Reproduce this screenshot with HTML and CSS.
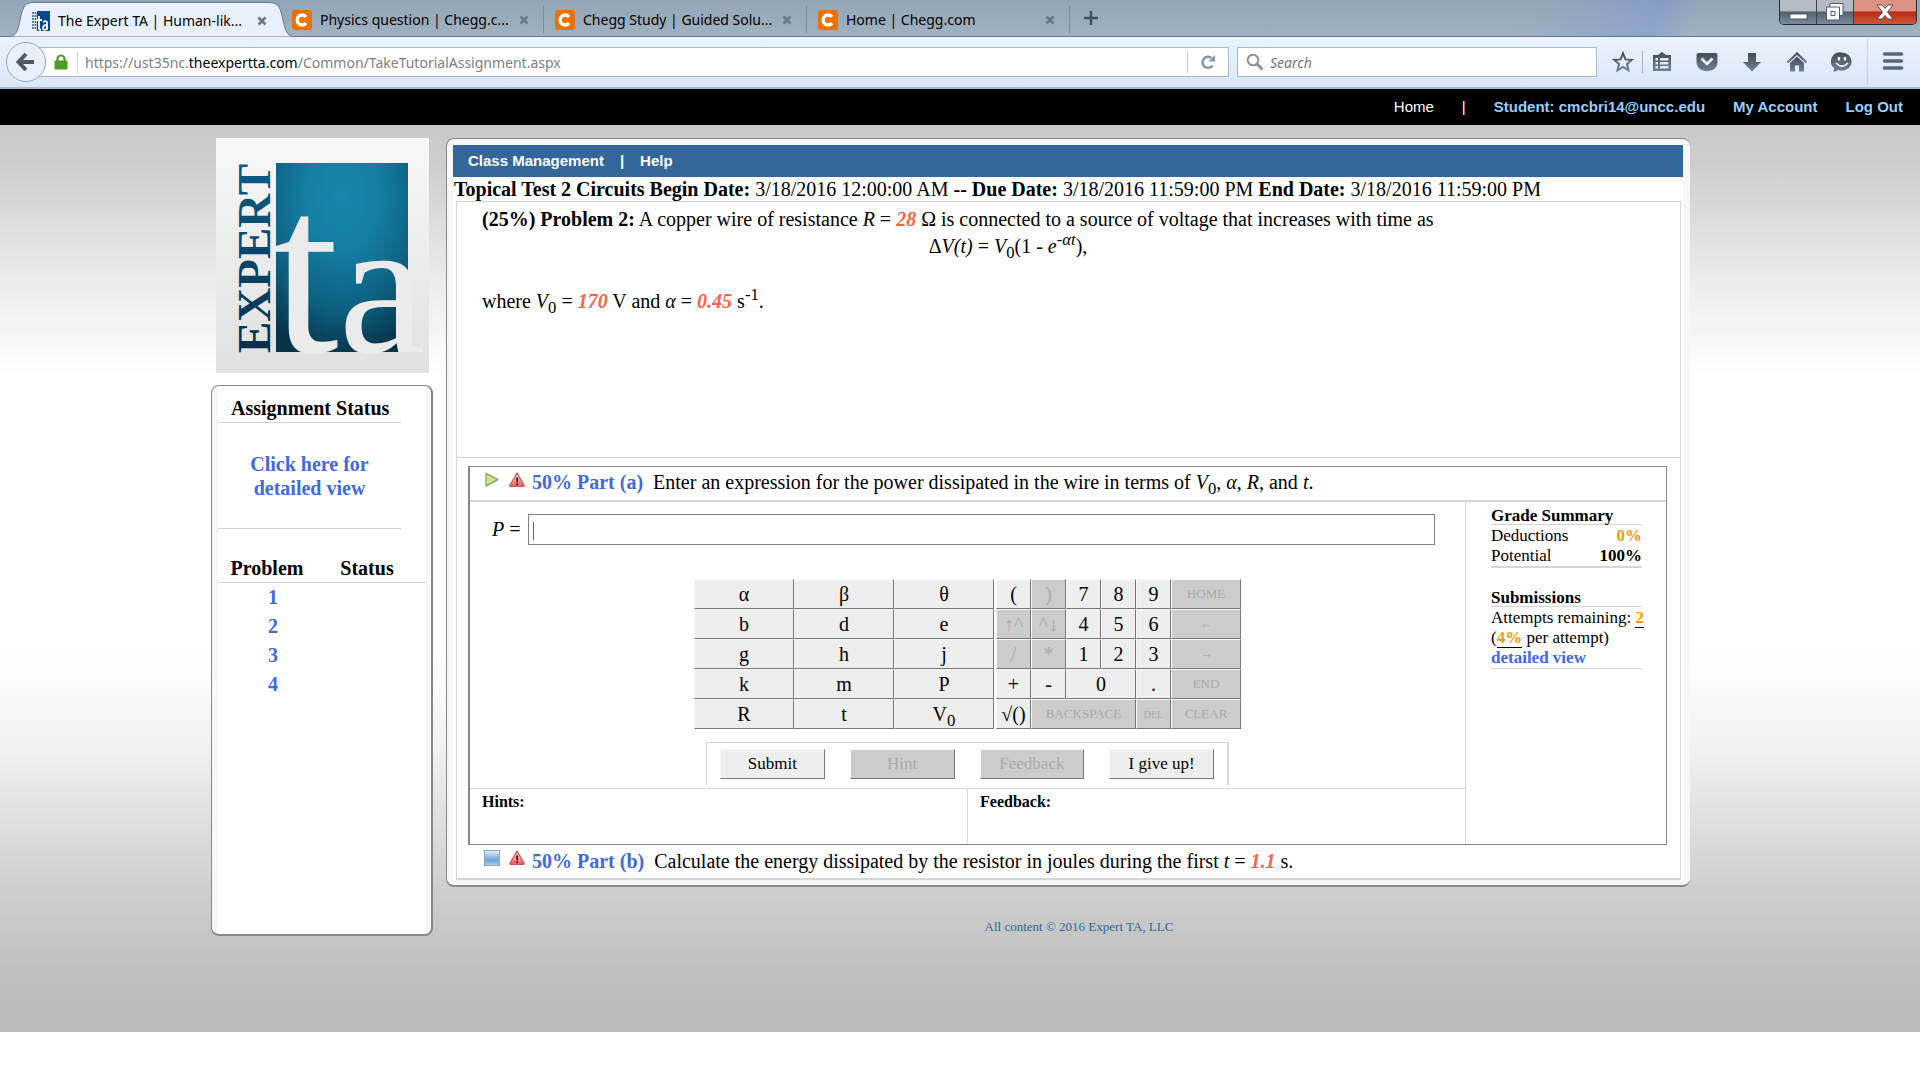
FILE: index.html
```html
<!DOCTYPE html>
<html lang="en">
<head>
<meta charset="UTF-8">
<meta name="viewport" content="width=device-width, initial-scale=1.0">
<title>The Expert TA | Human-like Grading</title>
<link rel="stylesheet" href="styles.css">
</head>
<body>

<svg class="defs" aria-hidden="true">
  <defs>
    <linearGradient id="steel" x1="0" y1="0" x2="0" y2="1">
      <stop offset="0" stop-color="#414d5a"/>
      <stop offset="1" stop-color="#728191"/>
    </linearGradient>
    <linearGradient id="red" x1="0" y1="0" x2="0" y2="1">
      <stop offset="0" stop-color="#fbe3e3"/>
      <stop offset="1" stop-color="#e55a5a"/>
    </linearGradient>
    <symbol id="warning" viewBox="0 0 16 16">
      <path d="M8 1 L15 13 Q15.500 14.500 14 14.500 H2 Q.5 14.500 1 13 Z" fill="url(#red)" stroke="#cc5353" stroke-width="1.200" stroke-linejoin="round"/>
      <path d="M7 5.500h2.200l-.4 5h-1.400z M7.100 11.500h2v1.600h-2z" fill="#6d0d0d"/>
    </symbol>
    <symbol id="chegg" viewBox="0 0 20 20">
      <rect width="20" height="20" rx="3" fill="#eb7100"/>
      <path d="M14 6.800 A5 5 0 1 0 14 13.200" fill="none" stroke="#fff" stroke-width="3.400"/>
    </symbol>
    <symbol id="close" viewBox="0 0 10 10">
      <path d="M1.500 1.500 L8.500 8.500 M8.500 1.500 L1.500 8.500" stroke="#66788a" stroke-width="2.600"/>
    </symbol>
  </defs>
</svg>

<div class="browser">
  <div class="tab-strip">
    <div class="tab active">
      <svg class="tab-shape" viewBox="0 0 290 37" width="290" height="37">
        <path d="M0 37 C14 37 12 25 16 12 C18 4 22 2.500 28 2.500 H262 C270 2.500 273 5 275 12 C279 25 278 37 290 37 Z" fill="#e8f1fb" stroke="#64788c"/>
      </svg>
      <svg class="favicon" viewBox="0 0 18 20" width="18" height="20">
        <rect x="5" width="13" height="20" fill="#08498d"/>
        <path d="M1 1v18 M3.500 1v18" stroke="#2e5d91" stroke-width="1.500" stroke-dasharray="2 1"/>
        <path d="M7 5v12q0 2 2 2 M5 9h5 M11 11q4-2 4 1v7 M15 14q-4 0-4 3t4 1" fill="none" stroke="#fff" stroke-width="1.800"/>
      </svg>
      <span class="tab-title">The Expert TA | Human-lik...</span>
      <button class="tab-close" aria-label="Close tab"><svg width="10" height="10"><use href="#close"/></svg></button>
    </div>
    <div class="tab">
      <svg class="favicon" width="20" height="20"><use href="#chegg"/></svg>
      <span class="tab-title">Physics question | Chegg.c...</span>
      <button class="tab-close" aria-label="Close tab"><svg width="10" height="10"><use href="#close"/></svg></button>
    </div>
    <div class="tab">
      <svg class="favicon" width="20" height="20"><use href="#chegg"/></svg>
      <span class="tab-title">Chegg Study | Guided Solu...</span>
      <button class="tab-close" aria-label="Close tab"><svg width="10" height="10"><use href="#close"/></svg></button>
    </div>
    <div class="tab">
      <svg class="favicon" width="20" height="20"><use href="#chegg"/></svg>
      <span class="tab-title">Home | Chegg.com</span>
      <button class="tab-close" aria-label="Close tab"><svg width="10" height="10"><use href="#close"/></svg></button>
    </div>
    <button class="new-tab" aria-label="New tab">
      <svg viewBox="0 0 14 14" width="14" height="14"><path d="M7 0v14 M0 7h14" stroke="#43515f" stroke-width="2.500"/></svg>
    </button>
    <div class="window-buttons">
      <button class="win" aria-label="Minimize">
        <svg viewBox="0 0 20 20" width="20" height="20"><rect x="2" y="12" width="17" height="5" fill="#fff" stroke="#4c5a6a"/></svg>
      </button>
      <button class="win" aria-label="Restore">
        <svg viewBox="0 0 20 20" width="20" height="20">
          <path d="M5 1.500h13v12h-13z" fill="#fff" stroke="#4c5a6a"/>
          <path d="M1.500 5h13v13h-13z M6 9.500h4v4h-4z" fill="#fff" fill-rule="evenodd" stroke="#4c5a6a"/>
        </svg>
      </button>
      <button class="win win-close" aria-label="Close">
        <svg viewBox="0 0 20 20" width="20" height="20"><path d="M2 3h5l3 3.500 3-3.500h5l-5.500 7 5.500 7h-5l-3-3.500-3 3.500h-5l5.500-7z" fill="#fff" stroke="#5c4a55"/></svg>
      </button>
    </div>
  </div>

  <div class="toolbar">
    <button class="back" aria-label="Back">
      <svg viewBox="0 0 20 20" width="20" height="20"><path d="M10 2 L2.500 10 L10 18 M3 10 H18" fill="none" stroke="#4d5967" stroke-width="4"/></svg>
    </button>
    <div class="url-bar">
      <svg class="lock" viewBox="0 0 14 16" width="14" height="16">
        <path d="M3.500 8V5a3.500 3.500 0 0 1 7 0v3" fill="none" stroke="#4f9b26" stroke-width="2.200"/>
        <rect x="0.500" y="6.500" width="13" height="9" rx="1" fill="#4f9b26"/>
      </svg>
      <span class="url">https://ust35nc.<b>theexpertta.com</b>/Common/TakeTutorialAssignment.aspx</span>
      <button class="reload" aria-label="Reload">
        <svg viewBox="0 0 16 16" width="16" height="16">
          <path d="M12.500 11.500 A5.500 5.500 0 1 1 11.500 4" fill="none" stroke="#8797a7" stroke-width="2.600"/>
          <path d="M15 1v6.500h-6.500z" fill="#8797a7"/>
        </svg>
      </button>
    </div>
    <div class="search-bar">
      <svg viewBox="0 0 18 18" width="18" height="18">
        <circle cx="7" cy="7" r="5.300" fill="none" stroke="#909090" stroke-width="2"/>
        <path d="M10.500 10.500 L16.500 16.500" stroke="#909090" stroke-width="3"/>
      </svg>
      <input type="text" placeholder="Search" aria-label="Search">
    </div>
    <div class="tools">
      <button class="tool" aria-label="Bookmark">
        <svg viewBox="0 0 22 22" width="22" height="22"><path d="M11 2.500l2.500 5.900 6.300.5-4.800 4.200 1.500 6.300-5.500-3.400-5.500 3.400 1.500-6.300-4.800-4.200 6.300-.5z" fill="none" stroke="url(#steel)" stroke-width="2"/></svg>
      </button>
      <button class="tool split" aria-label="Bookmarks list">
        <svg viewBox="0 0 22 22" width="22" height="22">
          <path d="M2 4h5l4-3 4 3h5v16h-18z M4.500 7v2.500h2.500v-2.500z M9 7v2.500h8.500v-2.500z M4.500 11v2.500h2.500v-2.500z M9 11v2.500h8.500v-2.500z M4.500 15v2.500h2.500v-2.500z M9 15v2.500h8.500v-2.500z" fill="url(#steel)" fill-rule="evenodd"/>
        </svg>
      </button>
      <button class="tool" aria-label="Pocket">
        <svg viewBox="0 0 22 22" width="22" height="22">
          <path d="M0.500 4q0-2 2-2h17q2 0 2 2v6q0 6-4 8.500-6.500 3.500-13 0-4-2.500-4-8.500z" fill="url(#steel)"/>
          <path d="M5.500 7.500l5.500 5.500 5.500-5.500" fill="none" stroke="#eef5fc" stroke-width="2.600"/>
        </svg>
      </button>
      <button class="tool" aria-label="Downloads">
        <svg viewBox="0 0 22 22" width="22" height="22"><path d="M7 2h8v9h5l-9 9.500-9-9.500h5z" fill="url(#steel)"/></svg>
      </button>
      <button class="tool" aria-label="Home page">
        <svg viewBox="0 0 22 22" width="22" height="22">
          <path d="M1.500 11.500l9.500-9 9.500 9" fill="none" stroke="url(#steel)" stroke-width="2.200"/>
          <path d="M4 12l7-6.500 7 6.500v8.500h-5v-6h-4v6h-5z" fill="url(#steel)"/>
        </svg>
      </button>
      <button class="tool" aria-label="Chat">
        <svg viewBox="0 0 22 22" width="22" height="22">
          <path d="M11 1.500a9.500 9 0 0 1 0 18.200q-2 0-4-.7-2 2-5 1.500 1.500-2 1-3.500a9.500 9 0 0 1 8-15.500z" fill="url(#steel)"/>
          <path d="M8 6v3.500 M14 6v3.500" stroke="#eef5fc" stroke-width="2.400"/>
          <path d="M5 12q6 6.500 12 0" fill="none" stroke="#eef5fc" stroke-width="1.800"/>
        </svg>
      </button>
      <button class="tool menu" aria-label="Menu">
        <svg viewBox="0 0 22 22" width="22" height="22"><path d="M2.500 3h17 M2.500 10h17 M2.500 17h17" stroke="#596776" stroke-width="3.600" stroke-linecap="round"/></svg>
      </button>
    </div>
  </div>
</div>

<nav class="account-bar">
  <a class="home" href="#">Home</a>
  <span class="bar">|</span>
  <a href="#">Student: cmcbri14@uncc.edu</a>
  <a href="#">My Account</a>
  <a href="#">Log Out</a>
</nav>

<div class="page">
  <aside class="side">
    <svg class="logo" viewBox="0 0 213 235" width="213" height="235" role="img" aria-label="Expert TA">
      <defs>
        <linearGradient id="paper" x1="0" y1="0" x2="0" y2="1">
          <stop offset="0" stop-color="#f8f8f8"/>
          <stop offset="1" stop-color="#e0e0e0"/>
        </linearGradient>
        <radialGradient id="blue" cx="0.500" cy="0.180" r="0.850">
          <stop offset="0" stop-color="#1787ad"/>
          <stop offset="0.350" stop-color="#147da2"/>
          <stop offset="0.700" stop-color="#0e5f7e"/>
          <stop offset="1" stop-color="#07344b"/>
        </radialGradient>
        <linearGradient id="ink" x1="0" y1="0" x2="1" y2="0">
          <stop offset="0" stop-color="#062f4a"/>
          <stop offset="1" stop-color="#0c5c86"/>
        </linearGradient>
      </defs>
      <rect width="213" height="235" fill="url(#paper)"/>
      <rect x="60" y="25" width="132" height="189" fill="url(#blue)"/>
      <text class="logo-expert" x="0" y="0" transform="translate(54 215) rotate(-90)" fill="url(#ink)">EXPERT</text>
      <text class="logo-ta" x="56" y="214">t<tspan class="logo-a">a</tspan></text>
    </svg>

    <section class="status-panel">
      <h2>Assignment Status</h2>
      <div class="detail-link"><a href="#">Click here for<br>detailed view</a></div>
      <table class="problems">
        <thead><tr><th>Problem</th><th>Status</th></tr></thead>
        <tbody>
          <tr><td><a href="#">1</a></td><td></td></tr>
          <tr><td><a href="#">2</a></td><td></td></tr>
          <tr><td><a href="#">3</a></td><td></td></tr>
          <tr><td><a href="#">4</a></td><td></td></tr>
        </tbody>
      </table>
    </section>
  </aside>

  <div class="content">
    <main class="main-panel">
      <nav class="class-nav">
        <a href="#">Class Management</a>
        <span>|</span>
        <a href="#">Help</a>
      </nav>
      <div class="dates"><b>Topical Test 2 Circuits Begin Date:</b> 3/18/2016 12:00:00 AM <b>-- Due Date:</b> 3/18/2016 11:59:00 PM <b>End Date:</b> 3/18/2016 11:59:00 PM</div>

      <div class="assignment">
        <div class="problem">
          <p><b>(25%) Problem 2:</b> A copper wire of resistance <i>R</i> = <em>28</em> Ω is connected to a source of voltage that increases with time as</p>
          <p class="equation">Δ<i>V(t)</i> = <i>V</i><sub>0</sub>(1 - <i>e</i><sup>-<i>αt</i></sup>),</p>
          <p>where <i>V</i><sub>0</sub> = <em>170</em> V and <i>α</i> = <em>0.45</em> s<sup>-1</sup>.</p>
        </div>

        <section class="part">
          <div class="part-head">
            <svg class="part-icon" viewBox="0 0 16 16" width="16" height="16"><path d="M2 1.500 L14 7.500 L2 14 Z" fill="#cbe59a" stroke="#8fae62" stroke-width="1.500" stroke-linejoin="round"/></svg>
            <svg class="part-icon" width="16" height="16"><use href="#warning"/></svg>
            <a href="#">50% Part (a)</a>
            <span>Enter an expression for the power dissipated in the wire in terms of <i>V</i><sub>0</sub>, <i>α</i>, <i>R</i>, and <i>t</i>.</span>
          </div>
          <div class="part-body">
            <div class="work">
              <div class="answer">
                <label for="answer"><i>P</i> =</label>
                <div class="answer-box">
                  <input type="text" id="answer">
                  <span class="caret"></span>
                </div>
              </div>

              <div class="keyboard">
                <div class="keys letters">
                  <button>α</button><button>β</button><button>θ</button>
                  <button>b</button><button>d</button><button>e</button>
                  <button>g</button><button>h</button><button>j</button>
                  <button>k</button><button>m</button><button>P</button>
                  <button>R</button><button>t</button><button>V<sub>0</sub></button>
                </div>
                <div class="keys numbers">
                  <button>(</button><button disabled>)</button><button>7</button><button>8</button><button>9</button><button class="wide small" disabled>HOME</button>
                  <button disabled>↑^</button><button disabled>^↓</button><button>4</button><button>5</button><button>6</button><button class="wide small" disabled>←</button>
                  <button disabled>/</button><button disabled>*</button><button>1</button><button>2</button><button>3</button><button class="wide small" disabled>→</button>
                  <button>+</button><button>-</button><button class="wide">0</button><button>.</button><button class="wide small" disabled>END</button>
                  <button>√()</button><button class="wider small" disabled>BACKSPACE</button><button class="tiny" disabled>DEL</button><button class="wide small" disabled>CLEAR</button>
                </div>
              </div>

              <div class="actions">
                <button>Submit</button>
                <button disabled>Hint</button>
                <button disabled>Feedback</button>
                <button>I give up!</button>
              </div>

              <div class="notes">
                <div>Hints:</div>
                <div>Feedback:</div>
              </div>
            </div>

            <div class="grades">
              <h3>Grade Summary</h3>
              <dl>
                <dt>Deductions</dt><dd class="orange">0%</dd>
                <dt>Potential</dt><dd>100%</dd>
              </dl>
              <h3>Submissions</h3>
              <div class="attempts">
                Attempts remaining: <b class="limit">2</b><br>
                (<b class="limit">4%</b> per attempt)<br>
                <a href="#">detailed view</a>
              </div>
            </div>
          </div>
        </section>

        <div class="part-head part-b">
          <svg class="part-icon" viewBox="0 0 16 16" width="16" height="16">
            <defs>
              <linearGradient id="square" x1="0" y1="0" x2="0" y2="1">
                <stop offset="0" stop-color="#e6f0f9"/>
                <stop offset="0.650" stop-color="#6aa3d8"/>
                <stop offset="1" stop-color="#b5d1ea"/>
              </linearGradient>
            </defs>
            <rect x="0.500" y="0.500" width="15" height="15" fill="url(#square)" stroke="#89a9c6"/>
          </svg>
          <svg class="part-icon" width="16" height="16"><use href="#warning"/></svg>
          <a href="#">50% Part (b)</a>
          <span>Calculate the energy dissipated by the resistor in joules during the first <i>t</i> = <em>1.1</em> s.</span>
        </div>
      </div>
    </main>
    <footer>All content © 2016 Expert TA, LLC</footer>
  </div>
</div>

</body>
</html>
```
FILE: styles.css
```css
* {
  box-sizing: border-box;
}
body {
  margin: 0;
  background: #fff;
  color: #000;
  font-family: "Liberation Serif", "Times New Roman", serif;
  font-size: 20px;
}
a {
  color: #4169e1;
  font-weight: bold;
  text-decoration: none;
}
button {
  font-family: inherit;
  padding: 0;
  border: none;
  background: none;
}
p, h2, h3, dl, dd {
  margin: 0;
}
svg {
  display: block;
  flex: none;
}
sub, sup {
  line-height: 0;
}
em {
  color: #ff6347;
  font-weight: bold;
}
.defs {
  position: absolute;
  width: 0;
  height: 0;
}

/* browser window */
.browser {
  font-family: "Noto Sans", "Open Sans", sans-serif;
  font-size: 14px;
}
.tab-strip {
  display: flex;
  height: 37px;
  padding-left: 18px;
  border-bottom: 1px solid #64788c;
  background:
    linear-gradient(115deg, transparent 79%, rgba(120, 145, 220, 0.3) 84%, rgba(120, 145, 220, 0.4) 86%, transparent 88%),
    linear-gradient(#93a5b5, #a0b1c0);
}
.tab {
  position: relative;
  display: flex;
  align-items: center;
  width: 263px;
  margin: 6px 0 3px;
  padding: 0 14px 0 11px;
  border-right: 1px solid #7b8d9d;
}
.tab.active {
  margin: 0;
  padding-left: 14px;
  padding-top: 5px;
  border-right: none;
}
.tab-shape {
  position: absolute;
  left: -12px;
  top: 0;
}
.favicon, .tab.active .tab-title, .tab.active .tab-close {
  position: relative;
}
.tab-title {
  flex: 1;
  margin-left: 8px;
  white-space: nowrap;
}
.new-tab {
  margin-left: 14px;
}
.window-buttons {
  display: flex;
  height: 25px;
  margin-left: auto;
  margin-right: 3px;
  border: 1px solid #222b35;
  border-top: none;
  border-radius: 0 0 5px 5px;
  overflow: hidden;
}
.win {
  display: flex;
  justify-content: center;
  align-items: center;
  width: 37px;
  border-right: 1px solid #35424f;
  background: linear-gradient(#b3bcc4 45%, #52606f 50%, #7b8b99);
}
.win-close {
  width: 62px;
  border-right: none;
  background: linear-gradient(#dd9384 45%, #b72c14 50%, #d0563c);
}
.toolbar {
  display: flex;
  align-items: center;
  height: 52px;
  padding: 0 13px 0 6px;
  border-bottom: 2px solid #a5bace;
  background: linear-gradient(#eaf3fc, #d9e7f8);
}
.back {
  position: relative;
  z-index: 1;
  display: flex;
  justify-content: center;
  align-items: center;
  width: 40px;
  height: 40px;
  border: 1px solid #93a9be;
  border-radius: 50%;
  background: #e8f1fb;
}
.url-bar {
  display: flex;
  align-items: center;
  flex: 1;
  height: 30px;
  margin-left: -8px;
  padding-left: 15px;
  border: 1px solid #a5bace;
  background: #fff;
}
.url {
  flex: 1;
  margin-left: 9px;
  padding-left: 7px;
  border-left: 1px solid #d0d0d0;
  line-height: 21px;
  color: #808080;
}
.url b {
  color: #000;
  font-weight: normal;
}
.reload {
  display: flex;
  justify-content: center;
  align-items: center;
  width: 41px;
  height: 22px;
  border-left: 1px solid #d0d0d0;
}
.search-bar {
  display: flex;
  align-items: center;
  width: 360px;
  height: 30px;
  margin-left: 8px;
  padding-left: 8px;
  border: 1px solid #a5bace;
  background: #fff;
}
.search-bar input {
  flex: 1;
  margin-left: 6px;
  padding: 0;
  border: none;
  background: none;
  font: italic 14px "Noto Sans", sans-serif;
}
.search-bar input::placeholder {
  color: #757575;
}
.tools {
  display: flex;
  align-items: center;
  margin-left: 6px;
}
.tool {
  display: flex;
  justify-content: center;
  width: 45px;
}
.tool:first-child {
  width: 39px;
}
.tool.split {
  width: 42px;
  padding-right: 3px;
  border-left: 1px solid #a9b6c3;
}
.tool.menu {
  width: 40px;
  margin-left: 3px;
  padding: 12px 0 12px 10px;
  border-left: 1px solid #c5d3e1;
}

/* account links */
.account-bar {
  display: flex;
  justify-content: flex-end;
  gap: 28px;
  height: 36px;
  padding-right: 17px;
  background: #000;
  font-family: "Liberation Sans", Arial, sans-serif;
  font-size: 15px;
  line-height: 36px;
}
.account-bar a {
  color: #99ccff;
}
.account-bar .home, .account-bar .bar {
  color: #fff;
  font-weight: normal;
}

/* page */
.page {
  display: flex;
  align-items: flex-start;
  padding: 13px 230px 96px 211px;
  background: linear-gradient(#c9c9c9, #cdcdcd 4%, #ebebeb 17%, #fff 28%, #fff 58%, #f0f0f0 69%, #cfcfcf 84%, #bebebe 94%, #bababa);
}
.side {
  width: 222px;
  margin-right: 13px;
}
.logo {
  margin: 0 0 12px 5px;
  overflow: visible;
}
.logo-expert {
  font-family: "Liberation Serif", serif;
  font-size: 47px;
  font-weight: bold;
}
.logo-ta {
  font-family: "Liberation Serif", serif;
  font-size: 240px;
  fill: #ebebeb;
}
.logo-a {
  font-size: 196px;
}
.status-panel {
  min-height: 551px;
  padding-top: 8px;
  border: 1px solid #888;
  border-width: 1px 2px 2px 1px;
  border-radius: 8px;
  background: linear-gradient(90deg, #f7f7f7 6px, #fff 6px, #fff 213px, #f7f7f7 213px);
}
.status-panel h2 {
  margin: 0 30px 0 6px;
  padding-left: 13px;
  border-bottom: 1px solid #d6d6d6;
  font-size: 20px;
  line-height: 28px;
}
.detail-link {
  margin: 0 30px 0 6px;
  padding: 29px 0 28px;
  border-bottom: 1px solid #d6d6d6;
  line-height: 24px;
  text-align: center;
}
.problems {
  width: 208px;
  margin: 27px 0 0 6px;
  border-collapse: collapse;
  line-height: 25px;
}
.problems th {
  padding: 0 0 1px;
  border-bottom: 1px solid #d6d6d6;
}
.problems th:first-child {
  width: 98px;
}
.problems th:last-child {
  padding-right: 8px;
}
.problems td {
  padding: 2px 0;
  text-align: center;
}
.problems td:first-child {
  padding-left: 12px;
}
.content {
  flex: 1;
}
.main-panel {
  padding: 6px 7px 5px 6px;
  border: 1px solid #888;
  border-width: 1px 0 2px 1px;
  border-radius: 8px;
  background: #f7f7f7;
}
.class-nav {
  display: flex;
  gap: 16px;
  height: 32px;
  padding-left: 15px;
  background: #336699;
  color: #fff;
  font: bold 15px/32px "Liberation Sans", Arial, sans-serif;
}
.class-nav a {
  color: #fff;
}
.dates {
  padding-left: 1px;
  background: #fff;
  line-height: 24px;
}
.assignment {
  margin: 0 2px 0 3px;
  border: 1px solid #d6d6d6;
  border-bottom-width: 2px;
  background: #fff;
  box-shadow: -3px 0 #fff, 2px 0 #fff;
}
.problem {
  min-height: 256px;
  padding: 4px 146px 0 25px;
  border-bottom: 1px solid #d6d6d6;
  line-height: 27px;
}
.equation {
  margin-bottom: 28px;
  text-align: center;
}
.part {
  margin: 8px 13px 0 11px;
  border: 1px solid #888;
  border-left-width: 2px;
}
.part-head {
  display: flex;
  padding: 0 0 3px 14px;
  border-bottom: 2px solid #d6d6d6;
  line-height: 30px;
}
.part-icon {
  margin: 5px 9px 0 0;
}
.part-head a {
  margin: 0 10px 0 -2px;
}
.part-head.part-b {
  padding: 0 0 0 27px;
  border-bottom: none;
  line-height: 33px;
}
.part-body {
  display: flex;
}
.work {
  flex: 1;
  padding-top: 12px;
}
.answer {
  display: flex;
  padding: 0 30px 0 22px;
}
.answer label {
  width: 36px;
  line-height: 31px;
}
.answer-box {
  position: relative;
  flex: 1;
}
.answer-box input {
  display: block;
  width: 100%;
  height: 31px;
  padding: 0 6px;
  border: 1px solid #808080;
  font: 20px "Liberation Serif", serif;
}
.caret {
  position: absolute;
  left: 5px;
  top: 8px;
  width: 1px;
  height: 18px;
  background: #e0303a;
}

/* keypad */
.keyboard {
  display: flex;
  justify-content: center;
  gap: 2px;
  margin-top: 34px;
}
.keys {
  display: grid;
  grid-auto-rows: 30px;
}
.letters {
  grid-template-columns: repeat(3, 100px);
}
.numbers {
  grid-template-columns: repeat(7, 35px);
}
.keys button, .actions button {
  border: 1px solid #f8f8f8;
  border-right-color: #777;
  border-bottom-color: #777;
  background: #eee;
  color: #000;
  font-size: 20px;
  white-space: nowrap;
}
.keys button:disabled, .actions button:disabled {
  background: #ccc;
  color: #aaa;
}
.keys .wide {
  grid-column: span 2;
}
.keys .wider {
  grid-column: span 3;
}
.keys .small {
  font-size: 13px;
}
.keys .tiny {
  font-size: 10px;
}
.actions {
  display: flex;
  gap: 25px;
  width: 523px;
  margin: 13px auto 3px;
  padding: 6px 13px;
  border: 1px solid #d6d6d6;
  border-width: 1px 2px 0 1px;
}
.actions button {
  width: 105px;
  height: 30px;
  font-size: 17px;
}
.notes {
  display: flex;
  border-top: 1px solid #d6d6d6;
  font-size: 16px;
  font-weight: bold;
  line-height: 26px;
}
.notes div {
  flex: 1;
  min-height: 55px;
  padding-left: 12px;
}
.notes div + div {
  border-left: 1px solid #d6d6d6;
}

/* grades */
.grades {
  width: 201px;
  padding: 6px 24px 0 25px;
  border-left: 1px solid #d6d6d6;
  font-size: 17px;
  line-height: 20px;
  white-space: nowrap;
}
.grades h3 {
  border-bottom: 1px solid #d6d6d6;
  font-size: 17px;
  line-height: 16px;
}
.grades dl {
  display: grid;
  grid-template-columns: 1fr auto;
  margin-bottom: 22px;
  padding-top: 1px;
  border-bottom: 2px solid #d6d6d6;
}
.grades dd {
  font-weight: bold;
  text-align: right;
}
.orange, .limit {
  color: #ff9900;
}
.limit {
  border-bottom: 1px solid #000;
}
.attempts {
  padding-top: 1px;
  border-bottom: 1px solid #d6d6d6;
}
footer {
  margin-top: 32px;
  padding-left: 22px;
  color: #336699;
  font-size: 13px;
  line-height: 16px;
  text-align: center;
}
```
